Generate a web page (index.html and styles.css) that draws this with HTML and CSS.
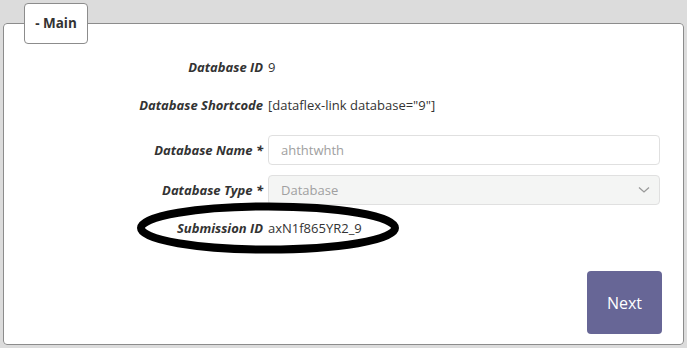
FILE: index.html
```html
<!DOCTYPE html>
<html lang="en">
<head>
    <meta charset="UTF-8">
    <title>Database - Main</title>
    <link rel="stylesheet" href="styles.css">
</head>
<body>
    <fieldset class="panel">
        <legend class="panel-tab"><span class="panel-tab-text">- Main</span></legend>

        <div class="form-row row-id">
            <span class="form-label">Database ID</span>
            <span class="form-value">9</span>
        </div>
        <div class="form-row row-shortcode">
            <span class="form-label">Database Shortcode</span>
            <span class="form-value">[dataflex-link database="9"]</span>
        </div>
        <div class="form-row row-name">
            <label class="form-label" for="db-name">Database Name *</label>
            <input type="text" id="db-name" class="form-input" value="ahthtwhth">
        </div>
        <div class="form-row row-type">
            <label class="form-label" for="db-type">Database Type *</label>
            <div class="select-wrap">
                <select id="db-type" class="form-input form-select" disabled>
                    <option>Database</option>
                </select>
                <svg class="select-arrow" width="12" height="8" viewBox="0 0 12 8">
                    <path d="M1 1.5 L6 6 L11 1.5" fill="none" stroke="#9a9a9a" stroke-width="1.3"/>
                </svg>
            </div>
        </div>
        <div class="form-row row-submission">
            <span class="form-label">Submission ID</span>
            <span class="form-value">axN1f865YR2_9</span>
            <svg class="circle-mark" width="272" height="60" viewBox="0 0 272 60">
                <ellipse cx="136" cy="30" rx="127" ry="21.5" fill="none" stroke="#000" stroke-width="8"/>
            </svg>
        </div>

        <div class="form-actions">
            <button type="button" class="btn-next">Next</button>
        </div>
    </fieldset>
</body>
</html>
```

FILE: styles.css
```css
/* page */
body {
    margin: 0;
    padding: 3px 3px 3px 3px;
    background-color: #dcdcdc;
    font-family: "Open Sans", Arial, sans-serif;
    font-size: 13px;
    color: #333;
}

.panel {
    margin: 0;
    padding: 0 23px 10px 20px;
    min-height: 284px;
    background: white;
    border: 1px solid #8c8c8c;
    border-radius: 4px;
    box-sizing: border-box;
}

.panel-tab {
    width: 64px;
    height: 41px;
    box-sizing: border-box;
    padding: 0;
    background: white;
    border: 1px solid #8c8c8c;
    border-radius: 4px;
    text-align: left;
}
.panel-tab-text {
    display: block;
    text-align: center;
    font-weight: bold;
    font-size: 13.5px;
    line-height: 38px;
    color: #333;
}

/* rows */
.form-row {
    position: relative;
    display: grid;
    grid-template-columns: 239px 1fr;
    column-gap: 5px;
    align-items: center;
    height: 30px;
}
.row-id { margin-top: 8px; }
.row-shortcode { margin-top: 8px; }
.row-name { margin-top: 15px; }
.row-type { margin-top: 10px; }
.row-submission { margin-top: 8px; }

.form-label {
    text-align: right;
    font-weight: bold;
    font-style: italic;
    font-size: 13px;
    color: #333;
}

.form-value {
    font-size: 13px;
    color: #333;
}

.form-input {
    width: 100%;
    height: 30px;
    box-sizing: border-box;
    padding: 4px 12px;
    border: 1px solid #e0e0e0;
    border-radius: 4px;
    background: white;
    font-family: "Open Sans", Arial, sans-serif;
    font-size: 13px;
    color: #a0a0a0;
}

.select-wrap {
    position: relative;
}
.form-select {
    appearance: none;
    background: #f4f5f4;
    opacity: 1;
}
.select-arrow {
    position: absolute;
    right: 10px;
    top: 11px;
}

/* the hand-drawn mark over the submission row */
.circle-mark {
    position: absolute;
    left: 108px;
    top: -15px;
    pointer-events: none;
}

.form-actions {
    display: flex;
    justify-content: flex-end;
    margin-top: 28px;
}

.btn-next {
    width: 75px;
    height: 63px;
    margin-right: -2px;
    background-color: #676696;
    color: white;
    border: none;
    border-radius: 4px;
    font-family: "Open Sans", Arial, sans-serif;
    font-size: 16px;
    cursor: pointer;
}
```
